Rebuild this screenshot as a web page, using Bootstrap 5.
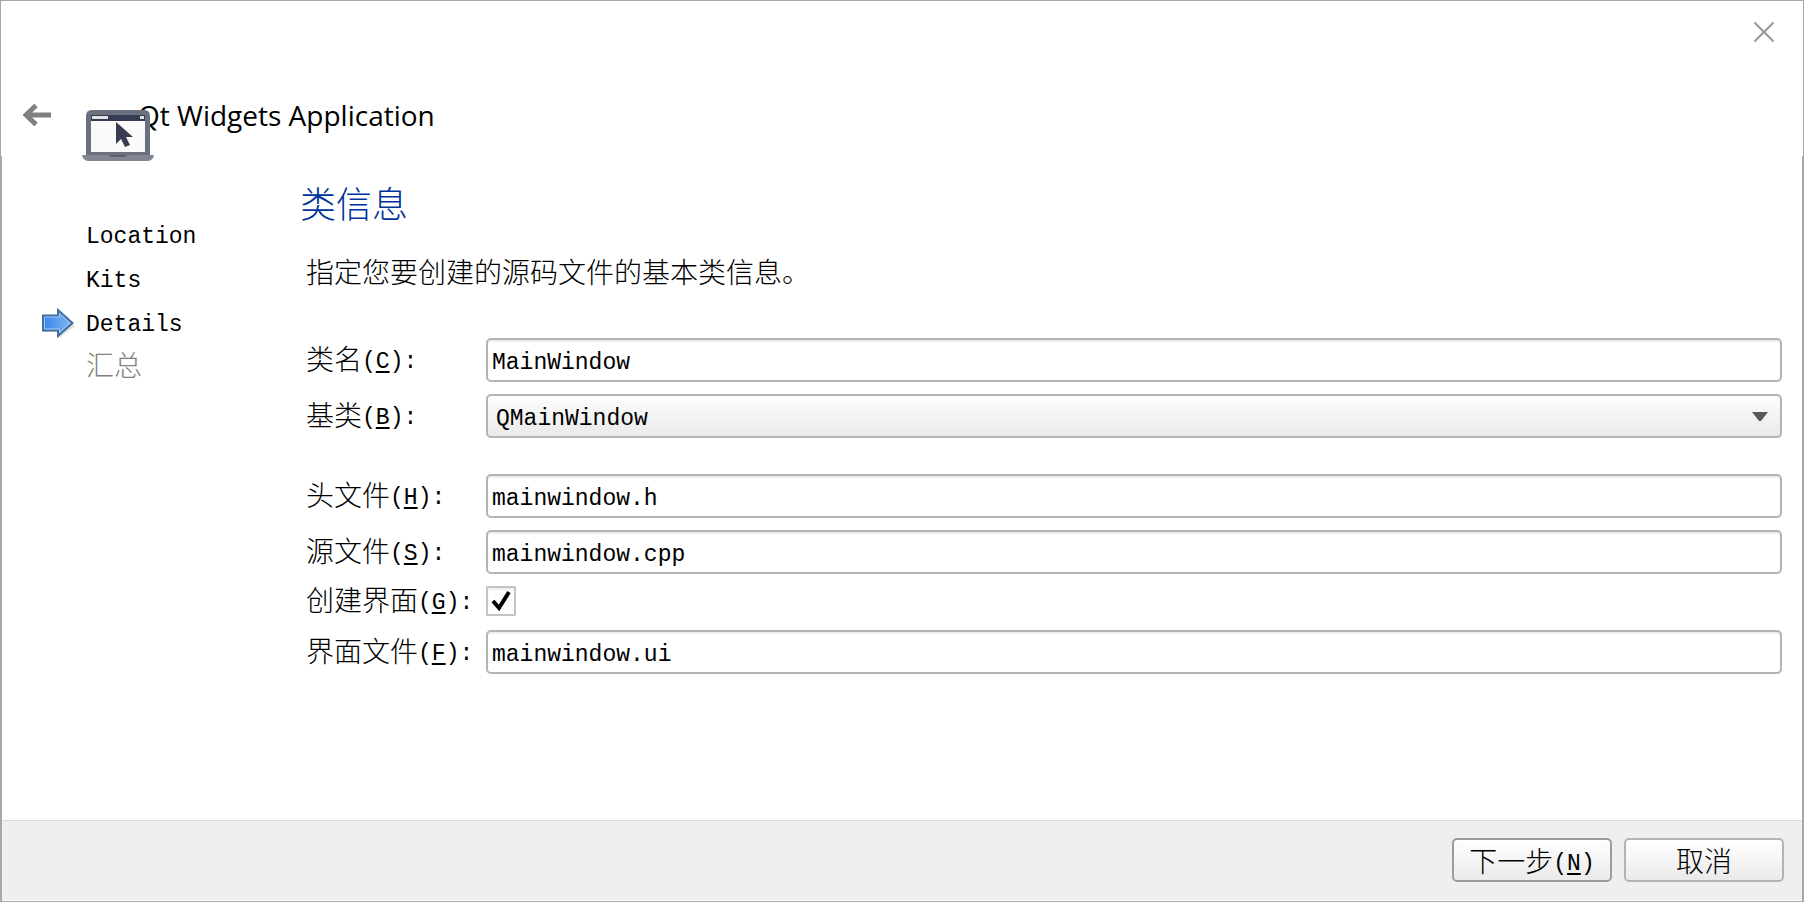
<!DOCTYPE html>
<html lang="zh-CN">
<head>
<meta charset="utf-8">
<meta name="viewport" content="width=device-width, initial-scale=1">
<title>Qt Widgets Application</title>
<link href="https://cdn.jsdelivr.net/npm/bootstrap@5.3.0/dist/css/bootstrap.min.css" rel="stylesheet">
<style>
  body { font: 300 28px/44px "Noto Sans CJK SC", sans-serif; color: #000; background: #fff; }
  .latin, .wizard-input, .wizard-combo { font-family: "Liberation Mono", "Noto Sans CJK SC", monospace; font-size: 23px; }
  .field-label .latin, .wizard-btn .latin { line-height: 1; vertical-align: 2px; }
  .wizard { border: 1px solid #a8a8a8; }
  .title-strip { height: 64px; padding: 12px 20px; }
  .close-btn { padding: 4px 9px; border: 0; background: none; line-height: 0; }
  .wizard-header { height: 91px; padding: 32px 22px 24px; }
  .back-btn { padding: 0; border: 0; background: none; line-height: 0; }
  .wizard-title { margin: 0 0 0 87px; font: 400 28px/44px "Open Sans", sans-serif; }
  .kit-icon { left: 81px; top: 45px; z-index: 1; }
  .wizard-body { border: solid #a8a8a8; border-width: 0 1px; }
  .steps { width: 298px; padding: 59px 0 0 40px; }
  .step-mark { width: 44px; line-height: 0; }
  .step-pending { color: #808080; line-height: 34px; }
  .page { padding: 18px 20px 0 0; }
  .page-title { font-size: 36px; line-height: 56px; font-weight: 300; color: #003399; margin: 0 0 19px; }
  .page-form { padding-left: 6px; }
  .intro { margin: 0 0 45px; }
  .field-row { margin-bottom: 12px; }
  .field-label { flex: 0 0 180px; height: 44px; line-height: 40px; white-space: nowrap; }
  .wizard-input, .wizard-combo { height: 44px; border: 2px solid #b4b4b4; border-radius: 5px; color: #000; line-height: 36px; }
  .wizard-input { padding: 5px 4px 0; box-shadow: inset 0 2px #eee; }
  .wizard-combo {
    padding: 5px 44px 0 8px;
    background: url("data:image/svg+xml,%3Csvg xmlns='http://www.w3.org/2000/svg' viewBox='0 0 16 9'%3E%3Cpath fill='%23595959' d='M0 0h16L9 9H7z'/%3E%3C/svg%3E") right 12px center/16px 9px no-repeat, linear-gradient(#fdfdfd, #eaeaea);
  }
  .wizard-check[type=checkbox] { width: 30px; height: 30px; margin: 0; border: 2px solid #c4c4c4; border-radius: 1px; box-shadow: inset 0 2px 2px #eee; }
  .wizard-check:checked[type=checkbox] {
    border-color: #c4c4c4; background-color: #fff;
    background-image: url("data:image/svg+xml,%3Csvg xmlns='http://www.w3.org/2000/svg' viewBox='0 0 26 26'%3E%3Cpath fill='none' stroke='%23000' stroke-width='4' d='M5 13l6 7L21 4'/%3E%3C/svg%3E");
    background-size: 100%;
  }
  .check-row { height: 30px; margin-bottom: 14px; }
  .wizard-footer { padding: 18px 18px 19px; background: #efefef; border: solid #a8a8a8; border-width: 0 1px; box-shadow: inset 0 1px #d8dad9, inset 0 -1px #fff; }
  .wizard-btn { width: 160px; height: 44px; padding: 0; border: 2px solid #b4b4b4; border-radius: 5px; background: linear-gradient(#fff, #eaeaea); color: #000; font-size: 28px; font-weight: 300; line-height: 36px; }
  .wizard-btn.default-btn { border-color: #9c9c9c; }
  u { text-decoration-thickness: 2px; text-underline-offset: 3px; }
</style>
</head>
<body>
<div class="wizard d-flex flex-column min-vh-100">
  <div class="title-strip d-flex justify-content-end align-items-start">
    <button type="button" class="close-btn" aria-label="关闭">
      <svg width="20" height="30" viewBox="0 0 20 30"><path d="M.5 5.500l19 19M19.500 5.500l-19 19" stroke="#999" stroke-width="2"/></svg>
    </button>
  </div>
  <header class="wizard-header position-relative d-flex align-items-center">
    <button type="button" class="back-btn" aria-label="返回">
      <svg width="28" height="22" viewBox="0 0 28 22"><path d="M3 11h25M13 1.500L3 11l10 9.500" fill="none" stroke="#808080" stroke-width="5"/></svg>
    </button>
    <h1 class="wizard-title">Qt Widgets Application</h1>
    <svg class="kit-icon position-absolute" width="72" height="51" viewBox="0 0 72 51">
      <path fill="#6a7080" fill-rule="evenodd" d="M4 46V6q0-6 6-6h52q6 0 6 6v40zM9 5v37h54V5z"/>
      <path fill="#fafafa" d="M9 10h54v32H9z"/>
      <path fill="#373c52" d="M9 5h54v6H9z"/>
      <path fill="#dfe1e3" d="M10 6h16v3H10zM58 6h4v3h-4z"/>
      <path fill="#373c52" d="M34 12v22l5-5 4 8 5-2-4-8h7z"/>
      <path fill="#838692" d="M0 45h72q-1 6-7 6H7q-6 0-7-6z"/>
      <path fill="#5b5f70" d="M27 45h18v1l-2 1H29l-2-1z"/>
    </svg>
  </header>
  <div class="wizard-body d-flex flex-grow-1">
    <ol class="steps list-unstyled mb-0 flex-shrink-0">
      <li class="d-flex align-items-center"><span class="step-mark"></span><span class="latin">Location</span></li>
      <li class="d-flex align-items-center"><span class="step-mark"></span><span class="latin">Kits</span></li>
      <li class="d-flex align-items-center" aria-current="step"><span class="step-mark">
        <svg width="34" height="34" viewBox="0 0 34 34">
          <defs><linearGradient id="arrowFill" x2="1" y2="0"><stop stop-color="#3585ee"/><stop offset="1" stop-color="#86b7f0"/></linearGradient></defs>
          <path d="M2 10h15V4l16 14-16 12v-6H2z" fill="#ccc" opacity=".6"/>
          <path d="M1 7.500h15V2l14.500 13L16 28v-5.500H1z" fill="url(#arrowFill)" stroke="#426d9f" stroke-width="2"/>
          <path d="M2.500 9h15V5.500L28 15 17.500 24.500V21h-15z" fill="none" stroke="#a3caf7"/>
        </svg></span><span class="latin">Details</span></li>
      <li class="d-flex align-items-center step-pending"><span class="step-mark"></span>汇总</li>
    </ol>
    <main class="page flex-grow-1">
      <h2 class="page-title">类信息</h2>
      <form class="page-form" id="classForm">
        <p class="intro">指定您要创建的源码文件的基本类信息。</p>
        <div class="field-row d-flex align-items-center">
          <label class="field-label" for="className">类名<span class="latin">(<u>C</u>):</span></label>
          <input class="form-control wizard-input flex-grow-1" id="className" type="text" value="MainWindow">
        </div>
        <div class="field-row d-flex align-items-center pb-4">
          <label class="field-label" for="baseClass">基类<span class="latin">(<u>B</u>):</span></label>
          <select class="form-select wizard-combo flex-grow-1" id="baseClass"><option>QMainWindow</option></select>
        </div>
        <div class="field-row d-flex align-items-center">
          <label class="field-label" for="headerFile">头文件<span class="latin">(<u>H</u>):</span></label>
          <input class="form-control wizard-input flex-grow-1" id="headerFile" type="text" value="mainwindow.h">
        </div>
        <div class="field-row d-flex align-items-center">
          <label class="field-label" for="sourceFile">源文件<span class="latin">(<u>S</u>):</span></label>
          <input class="form-control wizard-input flex-grow-1" id="sourceFile" type="text" value="mainwindow.cpp">
        </div>
        <div class="field-row check-row d-flex align-items-center">
          <label class="field-label" for="makeForm">创建界面<span class="latin">(<u>G</u>):</span></label>
          <input class="form-check-input wizard-check" id="makeForm" type="checkbox" checked>
        </div>
        <div class="field-row d-flex align-items-center">
          <label class="field-label" for="formFile">界面文件<span class="latin">(<u>F</u>):</span></label>
          <input class="form-control wizard-input flex-grow-1" id="formFile" type="text" value="mainwindow.ui">
        </div>
      </form>
    </main>
  </div>
  <footer class="wizard-footer d-flex justify-content-end">
    <button type="submit" form="classForm" class="btn wizard-btn default-btn me-2 ms-1">下一步<span class="latin">(<u>N</u>)</span></button>
    <button type="button" class="btn wizard-btn ms-1">取消</button>
  </footer>
</div>
<script src="https://cdn.jsdelivr.net/npm/bootstrap@5.3.0/dist/js/bootstrap.bundle.min.js"></script>
</body>
</html>
